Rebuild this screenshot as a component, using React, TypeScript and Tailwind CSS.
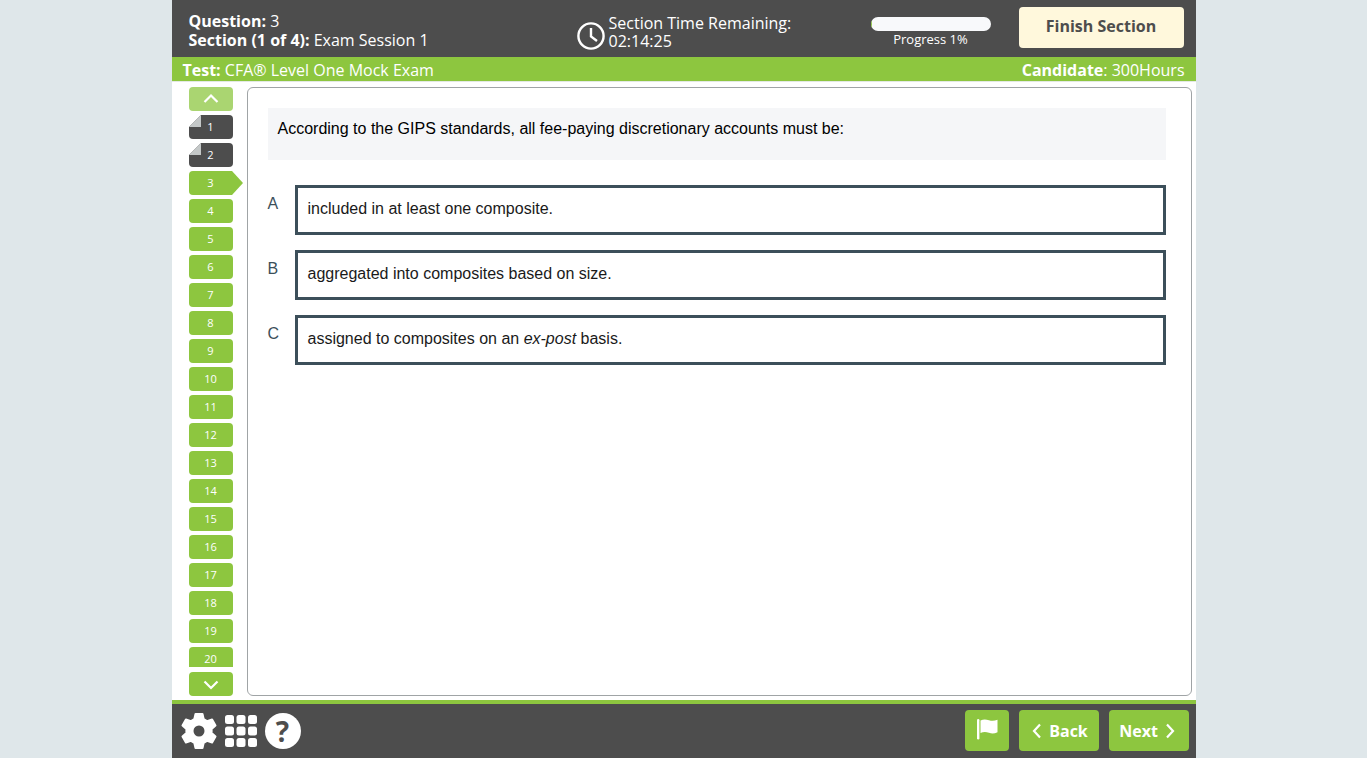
import { useState } from "react"
import clsx from "clsx"

const questions = Array.from({ length: 20 }, (_, i) => i + 1)

const options = [
  { letter: "A", text: <>included in at least one composite.</> },
  { letter: "B", text: <>aggregated into composites based on size.</> },
  { letter: "C", text: <>assigned to composites on an <em>ex-post</em> basis.</> },
]

const Chevron = ({ d, className }: { d: string; className: string }) => (
  <svg viewBox="0 0 16 16" fill="none" stroke="currentColor" strokeWidth="2.2" className={className} aria-hidden="true">
    <path d={d} />
  </svg>
)

const ClockIcon = () => (
  <svg viewBox="0 0 28 28" fill="none" stroke="currentColor" strokeWidth="2.4" className="size-7 shrink-0" aria-hidden="true">
    <circle cx="14" cy="14" r="12.6" />
    <path d="M14 6v8.500l6 4.500" />
  </svg>
)

const GearIcon = () => (
  <svg viewBox="0 0 36 36" className="size-9" fill="currentColor" aria-hidden="true">
    <path
      fillRule="evenodd"
      stroke="currentColor"
      strokeWidth="2"
      strokeLinejoin="round"
      d="M14.500 1h7l1.200 5.200 3.300 1.900 5.100-1.600 3.400 6-3.900 3.600v3.800l3.900 3.600-3.400 6-5.100-1.600-3.300 1.900L21.500 35h-7l-1.200-5.200-3.300-1.900-5.100 1.600-3.400-6 3.900-3.600v-3.800l-3.900-3.600 3.400-6 5.100 1.600 3.300-1.900zM18 11.500a6.500 6.500 0 1 0 0 13a6.500 6.500 0 1 0 0-13z"
    />
  </svg>
)

const GridIcon = () => (
  <svg viewBox="0 0 32 32" className="size-8" fill="currentColor" aria-hidden="true">
    {[0, 11.5, 23].map((y) =>
      [0, 11.5, 23].map((x) => <rect key={`${x}-${y}`} x={x} y={y} width="9" height="9" rx="2.500" />)
    )}
  </svg>
)

const FlagIcon = () => (
  <svg viewBox="0 0 22 22" className="size-[22px]" fill="currentColor" aria-hidden="true">
    <rect x="1" y="1" width="2.400" height="20.500" rx="1.200" />
    <path d="M4.500 2.500c3-1.600 5.500-1.300 8.500-.3 3 .9 5.500.7 8.500-.5v12.500c-3 1.400-5.500 1.600-8.500.6-3-.9-5.500-1.100-8.500.3z" />
  </svg>
)

const Header = () => (
  <header className="text-white">
    <div className="grid h-[57px] grid-cols-[388fr_294fr_148fr_165px] items-start bg-[#4d4d4d] pl-[17px] pr-3">
      <div className="pt-3 leading-[19px]">
        <p><strong>Question:</strong> 3</p>
        <p><strong>Section (1 of 4):</strong> Exam Session 1</p>
      </div>

      <div className="flex items-end gap-1 pt-[14px] leading-[18px]">
        <ClockIcon />
        <p>Section Time Remaining:<br />02:14:25</p>
      </div>

      <div className="w-[120px] pt-[17px] text-center text-[13px] leading-4">
        <div className="h-[14px] overflow-hidden rounded-full bg-[#f8f9fb]">
          <div className="h-full w-px bg-[#8dc63f]" />
        </div>
        <p>Progress 1%</p>
      </div>

      <button className="mt-[7px] h-[41px] rounded bg-[#fff8dc] pb-[3px] font-bold text-[#4d4d4d]">
        Finish Section
      </button>
    </div>

    <div className="flex h-6 items-end justify-between bg-[#8dc63f] pl-[11px] pr-[11px] leading-[22px]">
      <p><strong>Test:</strong> CFA® Level One Mock Exam</p>
      <p><strong>Candidate</strong>: 300Hours</p>
    </div>
  </header>
)

const QuestionNav = ({ current, onSelect }: { current: number; onSelect: (n: number) => void }) => (
  <nav className="flex w-[75px] shrink-0 flex-col pl-[17px] text-[11px] font-medium text-white">
    <button aria-label="Scroll up" className="mb-1 flex h-6 w-11 shrink-0 items-center justify-center rounded bg-[#aad571]">
      <Chevron d="M1.500 11 8 4.500l6.500 6.500" className="size-4" />
    </button>

    <ul className="mb-[5px] flex min-h-0 flex-1 flex-col gap-1 overflow-hidden">
      {questions.map((n) => (
        <li key={n} className="flex h-6 shrink-0">
          <button
            onClick={() => onSelect(n)}
            className={clsx(
              "relative h-6 w-11 rounded",
              n < 3 ? "bg-[#4d4d4d]" : "bg-[#8dc63f]"
            )}
          >
            {n < 3 && (
              <svg viewBox="0 0 12 12" className="absolute left-0 top-0 size-3" aria-hidden="true">
                <path d="M0 0h12L0 12z" fill="#fff" />
                <path d="M12 0v12H0z" fill="#c4c8c8" />
              </svg>
            )}
            {n}
          </button>
          {n === current && (
            <svg viewBox="0 0 14 24" className="-ml-1 h-6 w-[14px]" fill={n < 3 ? "#4d4d4d" : "#8dc63f"} aria-hidden="true">
              <path d="M0 0h3l11 12L3 24H0z" />
            </svg>
          )}
        </li>
      ))}
    </ul>

    <button aria-label="Scroll down" className="flex h-6 w-11 shrink-0 items-center justify-center rounded bg-[#8dc63f]">
      <Chevron d="M1.500 5.500 8 12l6.500-6.500" className="size-4" />
    </button>
  </nav>
)

const Question = () => {
  const [selected, setSelected] = useState<string | null>(null)

  return (
    <section className="mr-1 flex-1 overflow-auto rounded-md border border-[#a0a4a6] py-5 pl-5 pr-[25px] font-['Liberation_Sans',Arial,sans-serif] text-[#1a1a1a]">
      <p className="mb-[25px] h-[52px] bg-[#f5f6f8] px-[10px] pt-[9px] text-black">
        According to the GIPS standards, all fee-paying discretionary accounts must be:
      </p>

      <div className="flex flex-col gap-[15px]">
        {options.map(({ letter, text }) => (
          <div key={letter} className="flex">
            <span id={`option-${letter}`} className="w-[27px] shrink-0 pt-[7px] text-[#3c4f5a]">{letter}</span>
            <button
              aria-describedby={`option-${letter}`}
              onClick={() => setSelected(letter)}
              className={clsx(
                "flex h-[50px] flex-1 border-3 border-[#3c4f5a] px-[10px] pt-[9px] text-left",
                selected === letter && "bg-[#e8f4d8]"
              )}
            >
              <span>{text}</span>
            </button>
          </div>
        ))}
      </div>
    </section>
  )
}

const Footer = () => (
  <footer className="flex h-[58px] shrink-0 items-center justify-between border-t-4 border-[#8dc63f] bg-[#4d4d4d] pb-px pl-[9px] pr-[7px] font-bold text-white">
    <div className="flex items-center gap-2">
      <button aria-label="Settings"><GearIcon /></button>
      <button aria-label="All questions"><GridIcon /></button>
      <button aria-label="Help" className="size-9 rounded-full bg-white text-[28px] leading-9 text-[#4d4d4d]">?</button>
    </div>

    <div className="flex gap-[10px]">
      <button aria-label="Flag question" className="flex h-[41px] w-11 justify-center rounded bg-[#8dc63f] pt-2">
        <FlagIcon />
      </button>
      <button className="flex h-[41px] w-20 items-center justify-center gap-1 rounded bg-[#8dc63f]">
        <Chevron d="M11 1.500 5 8l6 6.500" className="size-4" />
        Back
      </button>
      <button className="flex h-[41px] w-20 items-center justify-center gap-1 rounded bg-[#8dc63f]">
        Next
        <Chevron d="M5 1.500 11 8l-6 6.500" className="size-4" />
      </button>
    </div>
  </footer>
)

export default function App() {
  const [current, setCurrent] = useState(3)

  return (
    <div className="h-screen bg-[#dfe7ea] font-['Open_Sans','Noto_Sans',sans-serif] text-base">
      <div className="mx-auto flex h-full max-w-5xl flex-col bg-white">
        <Header />
        <main className="flex min-h-0 flex-1 border-t border-[#e3e9e4] pb-1 pt-[5px]">
          <QuestionNav current={current} onSelect={setCurrent} />
          <Question />
        </main>
        <Footer />
      </div>
    </div>
  )
}
